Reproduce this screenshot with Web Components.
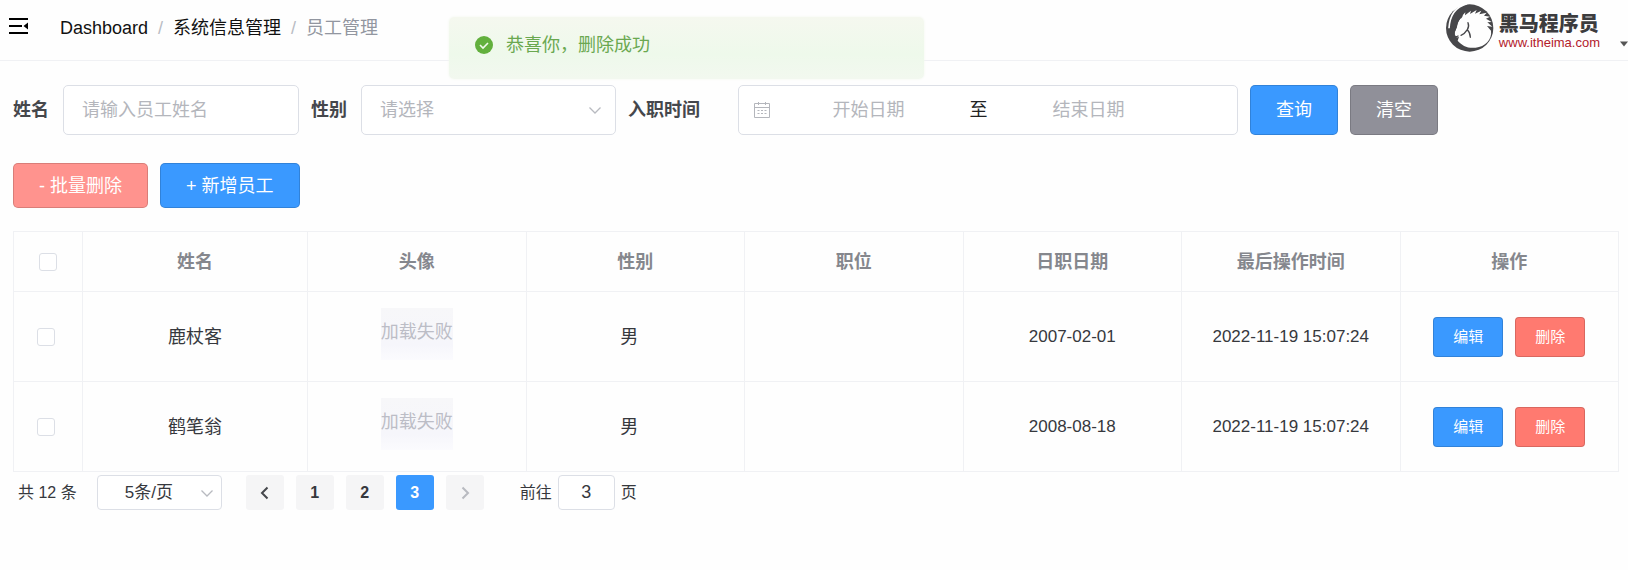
<!DOCTYPE html>
<html lang="zh-CN">
<head>
<meta charset="UTF-8">
<meta name="viewport" content="width=device-width, initial-scale=1.0">
<title>员工管理</title>
<style>
:root {
    --primary: #3a99ff;
    --danger: #ff7a70;
    --danger-light: #ff938e;
    --info: #909099;
    --border-color: #dcdfe6;
    --line-color: #f0f1f4;
    --text-color: #36383d;
    --hint-color: #b4b6bc;
}

body {
    margin: 0;
    background: #fefefe;
    color: var(--text-color);
    font: 18px/24px "Liberation Sans", "Noto Sans CJK SC", sans-serif;
}

main {
    padding: 24px 9px 0 13px;
}

.filters {
    display: flex;
    flex-wrap: wrap;
    gap: 12px;
}

.actions {
    display: flex;
    gap: 12px;
    margin: 28px 0 23px;
}
</style>
</head>
<body>
<app-header>
    <app-breadcrumb></app-breadcrumb>
    <brand-logo slot="right"></brand-logo>
</app-header>
<app-message>恭喜你，删除成功</app-message>
<main>
    <form class="filters">
        <text-field label="姓名" placeholder="请输入员工姓名"></text-field>
        <select-field label="性别" placeholder="请选择"></select-field>
        <date-range label="入职时间"></date-range>
        <app-button type="primary" size="large">查询</app-button>
        <app-button type="info" size="large">清空</app-button>
    </form>
    <div class="actions">
        <app-button type="danger" disabled>- 批量删除</app-button>
        <app-button type="primary">+ 新增员工</app-button>
    </div>
    <emp-table></emp-table>
    <page-nav></page-nav>
</main>

<script>
// 共用樣式
const base = `
* { box-sizing: border-box; }
input, select, button { font: inherit; color: inherit; margin: 0; }
input::placeholder { color: var(--hint-color); opacity: 1; }
.box {
    height: 50px;
    border: 1px solid var(--border-color);
    border-radius: 5px;
    background: #fff;
}
label { font-weight: 700; color: #45474c; white-space: nowrap; }
.stack { display: grid; align-items: center; }
.stack > * { grid-area: 1 / 1; }
.stack > svg { justify-self: end; pointer-events: none; }
select { appearance: none; width: 100%; }
`;

const chevron = `<svg width="14" height="14" viewBox="0 0 14 14" fill="none" stroke="#b8bac0" stroke-width="1.3" aria-hidden="true"><path d="M1.5 4.5 7 10l5.5-5.5"/></svg>`;

class AppHeader extends HTMLElement {
    constructor() {
        super();
        this.attachShadow({ mode: 'open' }).innerHTML = `
<style>
:host { display: block; }
header {
    display: flex;
    align-items: center;
    height: 61px;
    box-sizing: border-box;
    padding: 0 0 4px 8px;
    border-bottom: 1px solid var(--line-color);
    overflow: hidden;
}
button { width: 22px; height: 22px; padding: 0; border: 0; background: none; }
svg { display: block; }
slot[name] { display: flex; margin-left: auto; }
.menu { margin-right: 30px; }
.more { display: flex; align-items: flex-end; width: 8px; height: 38px; margin-left: 20px; }
</style>
<header>
    <button class="menu" type="button" aria-label="收起菜单">
        <svg width="22" height="22" viewBox="0 0 22 22"><path d="M1 1h19v2H1zM1 8h13v2H1zM1 15h19v2H1zM20 5.500v7l-4.500-3.500z"/></svg>
    </button>
    <slot></slot>
    <slot name="right"></slot>
    <button class="more" type="button" aria-label="更多">
        <svg width="10" height="6" viewBox="0 0 10 6"><path fill="#555" d="M0 0h10L5 6z"/></svg>
    </button>
</header>`;
    }
}

class AppBreadcrumb extends HTMLElement {
    constructor() {
        super();
        this.attachShadow({ mode: 'open' }).innerHTML = `
<style>
:host { display: block; }
nav { display: flex; gap: 10px; color: #9296a0; }
a { color: #111; text-decoration: none; }
i { font-style: normal; color: #b9bcc4; }
</style>
<nav aria-label="面包屑">
    <a href="#dashboard">Dashboard</a><i>/</i>
    <a href="#system">系统信息管理</a><i>/</i>
    <span>员工管理</span>
</nav>`;
    }
}

class BrandLogo extends HTMLElement {
    constructor() {
        super();
        this.attachShadow({ mode: 'open' }).innerHTML = `
<style>
:host { display: flex; align-items: center; gap: 5px; }
svg { display: block; }
.text { padding-top: 8px; }
.name { font-size: 20px; line-height: 22px; font-weight: 900; color: #3c3c3e; }
.site { font-size: 13px; line-height: 16px; color: #b3202b; }
</style>
<svg width="48" height="50" viewBox="16 10 144 150" aria-hidden="true">
    <circle cx="87" cy="85" r="71" fill="#47474a"/>
    <path fill="#fefefe" d="M61 52 74 38l-1 9 18-14-3 10 20-12-5 11 19-9-6 11 22-5-8 9 18 3-12 6 17 10-13 1 15 13-16-2 12 14c4 26-18 48-46 51-24 3-42-7-54-21l4-12c-8 4-14 0-13-8 0-7 4-12 6-20 2-9 4-18 12-27z"/>
    <path fill="none" stroke="#fefefe" stroke-width="5" d="M79 12C47 21 27 46 25 86"/>
    <path fill="none" stroke="#47474a" stroke-width="4" stroke-linecap="round" d="M61 52c-11 10-13 21-14 29-3 8-7 13-7 20 0 9 5 12 12 8M82 69c3 8 2 15-2 21-5 8-11 14-19 17M80 90c5 5 9 11 9 23M62 42c3 3 2 8-1 12"/>
</svg>
<div class="text">
    <div class="name">黑马程序员</div>
    <div class="site">www.itheima.com</div>
</div>`;
    }
}

class AppMessage extends HTMLElement {
    constructor() {
        super();
        // 浮在頁首上方的提示
        this.attachShadow({ mode: 'open' }).innerHTML = `
<style>
:host {
    position: absolute;
    top: 17px;
    left: 50%;
    width: 475px;
    margin-left: -365px;
    box-sizing: border-box;
    display: flex;
    align-items: center;
    gap: 13px;
    padding: 16px 26px 22px;
    border-radius: 5px;
    background: linear-gradient(#f5f8ef, #eef9eb 60%, #f2f8ef);
    box-shadow: 0 0 3px #f2f8ef;
    color: #6aa850;
}
</style>
<svg width="18" height="18" viewBox="0 0 18 18" aria-hidden="true"><circle cx="9" cy="9" r="9" fill="#62b03d"/><path d="m5 9 3 3 5-5" fill="none" stroke="#f0f9eb" stroke-width="1.600"/></svg>
<span role="status"><slot></slot></span>`;
    }
}

class AppButton extends HTMLElement {
    constructor() {
        super();
        this.attachShadow({ mode: 'open' }).innerHTML = `
<style>${base}
:host { display: block; }
button {
    display: block;
    height: 45px;
    padding: 0 25px;
    border: 1px solid #00000026;
    border-radius: 5px;
    background: var(--primary);
    color: #fff;
    white-space: nowrap;
}
:host([type=danger]) button { background: var(--danger); }
:host([type=info]) button { background: var(--info); }
:host([disabled]) button { background: var(--danger-light); }
:host([size=large]) button { height: 50px; }
:host([size=small]) button { height: 40px; padding: 0 19px; font-size: 15px; border-radius: 4px; }
</style>
<button type="button"><slot></slot></button>`;
    }
    connectedCallback() {
        this.shadowRoot.querySelector('button').disabled = this.hasAttribute('disabled');
    }
}

class TextField extends HTMLElement {
    connectedCallback() {
        this.attachShadow({ mode: 'open' }).innerHTML = `
<style>${base}
:host { display: flex; align-items: center; gap: 14px; }
input { width: 236px; padding: 0 18px; }
</style>
<label for="f">${this.getAttribute('label')}</label>
<input id="f" class="box" type="text" placeholder="${this.getAttribute('placeholder')}">`;
    }
}

class SelectField extends HTMLElement {
    connectedCallback() {
        this.attachShadow({ mode: 'open' }).innerHTML = `
<style>${base}
:host { display: flex; align-items: center; gap: 14px; }
.stack { width: 255px; }
.stack svg { margin-right: 14px; }
select { padding: 0 18px; color: var(--hint-color); }
</style>
<label for="f">${this.getAttribute('label')}</label>
<div class="stack">
    <select id="f" class="box"><option>${this.getAttribute('placeholder')}</option><option>男</option><option>女</option></select>
    ${chevron}
</div>`;
    }
}

class DateRange extends HTMLElement {
    connectedCallback() {
        this.attachShadow({ mode: 'open' }).innerHTML = `
<style>${base}
:host { display: flex; align-items: center; }
label { width: 110px; }
.box { display: flex; align-items: center; width: 500px; padding: 0 14px; }
input { flex: 1; min-width: 0; padding: 0; border: 0; outline: 0; background: none; text-align: center; }
span { width: 25px; text-align: center; color: #222; }
.end { margin-right: 37px; }
</style>
<label for="start">${this.getAttribute('label')}</label>
<div class="box">
    <svg width="18" height="18" viewBox="0 0 18 18" fill="none" stroke="#b4b6bc" aria-hidden="true"><path d="M1.500 2.500h15v14h-15zM1.500 6.500h15M5.500 1v3M12.500 1v3M4.500 9.500h2M8 9.500h2M11.500 9.500h2M4.500 12.500h2M8 12.500h2M11.500 12.500h2"/></svg>
    <input id="start" type="text" placeholder="开始日期">
    <span>至</span>
    <input class="end" type="text" placeholder="结束日期" aria-label="结束日期">
</div>`;
    }
}

const rows = [
    { name: '鹿杖客', gender: '男', job: '', entry: '2007-02-01', updated: '2022-11-19 15:07:24' },
    { name: '鹤笔翁', gender: '男', job: '', entry: '2008-08-18', updated: '2022-11-19 15:07:24' },
];

class EmpTable extends HTMLElement {
    connectedCallback() {
        this.attachShadow({ mode: 'open' }).innerHTML = `
<style>${base}
:host { display: block; }
table {
    width: 100%;
    table-layout: fixed;
    border-collapse: collapse;
    border: 1px solid var(--line-color);
}
th, td { padding: 0; border: 1px solid var(--line-color); text-align: center; }
th { height: 60px; color: #85878d; }
td { height: 90px; }
.check { width: 69px; }
.name { width: 225px; }
.date { font-size: 17px; }
td.check { padding-right: 5px; }
td.gender { padding-right: 12px; }
input {
    appearance: none;
    display: block;
    width: 18px;
    height: 18px;
    margin: 0 auto;
    border: 1px solid var(--border-color);
    border-radius: 3px;
    background: #fff;
}
.avatar {
    width: 72px;
    height: 52px;
    margin: 0 auto 6px;
    line-height: 48px;
    background: linear-gradient(#f7f7f9, #f6f6fb 70%, #fbfbfe);
    color: #bcbdc6;
    white-space: nowrap;
}
.ops { display: flex; justify-content: center; gap: 12px; }
</style>
<table>
    <thead>
        <tr>
            <th class="check"><input type="checkbox" aria-label="全选"></th>
            <th class="name">姓名</th><th>头像</th><th>性别</th><th>职位</th>
            <th>日职日期</th><th>最后操作时间</th><th>操作</th>
        </tr>
    </thead>
    <tbody>${rows.map(r => `
        <tr>
            <td class="check"><input type="checkbox" aria-label="选择${r.name}"></td>
            <td>${r.name}</td>
            <td><div class="avatar">加载失败</div></td>
            <td class="gender">${r.gender}</td>
            <td>${r.job}</td>
            <td class="date">${r.entry}</td>
            <td class="date">${r.updated}</td>
            <td><div class="ops">
                <app-button type="primary" size="small">编辑</app-button>
                <app-button type="danger" size="small">删除</app-button>
            </div></td>
        </tr>`).join('')}
    </tbody>
</table>`;
    }
}

class PageNav extends HTMLElement {
    connectedCallback() {
        this.attachShadow({ mode: 'open' }).innerHTML = `
<style>${base}
:host { display: block; }
nav { display: flex; align-items: center; padding: 3px 5px; font-size: 16px; }
.box { height: 35px; border-radius: 4px; }
.stack { width: 125px; margin: 0 24px 0 20px; }
.stack svg { margin-right: 8px; }
select { padding: 0 27px; font-size: 17px; }
.pages { display: flex; gap: 12px; margin-right: 36px; }
button {
    display: flex;
    align-items: center;
    justify-content: center;
    width: 38px;
    height: 35px;
    padding: 0;
    border: 0;
    border-radius: 3px;
    background: #f5f5f6;
    font-weight: 700;
}
button[aria-current] { background: var(--primary); color: #fff; }
label { font-weight: 400; color: inherit; }
input { width: 57px; margin: 0 6px; padding: 0; text-align: center; font-size: 18px; }
</style>
<nav aria-label="分页">
    <span>共 12 条</span>
    <div class="stack">
        <select class="box" aria-label="每页条数"><option>5条/页</option><option>10条/页</option></select>
        ${chevron}
    </div>
    <div class="pages">
        <button type="button" aria-label="上一页"><svg width="14" height="14" viewBox="0 0 14 14" fill="none" stroke="#45474c" stroke-width="2"><path d="M9.500 1.500 4 7l5.500 5.500"/></svg></button>
        <button type="button">1</button>
        <button type="button">2</button>
        <button type="button" aria-current="page">3</button>
        <button type="button" disabled aria-label="下一页"><svg width="14" height="14" viewBox="0 0 14 14" fill="none" stroke="#b8bac0" stroke-width="2"><path d="M4.500 1.500 10 7l-5.500 5.500"/></svg></button>
    </div>
    <label for="jump">前往</label>
    <input id="jump" class="box" type="text" value="3">
    <span>页</span>
</nav>`;
    }
}

customElements.define('app-header', AppHeader);
customElements.define('app-breadcrumb', AppBreadcrumb);
customElements.define('brand-logo', BrandLogo);
customElements.define('app-message', AppMessage);
customElements.define('app-button', AppButton);
customElements.define('text-field', TextField);
customElements.define('select-field', SelectField);
customElements.define('date-range', DateRange);
customElements.define('emp-table', EmpTable);
customElements.define('page-nav', PageNav);
</script>
</body>
</html>
